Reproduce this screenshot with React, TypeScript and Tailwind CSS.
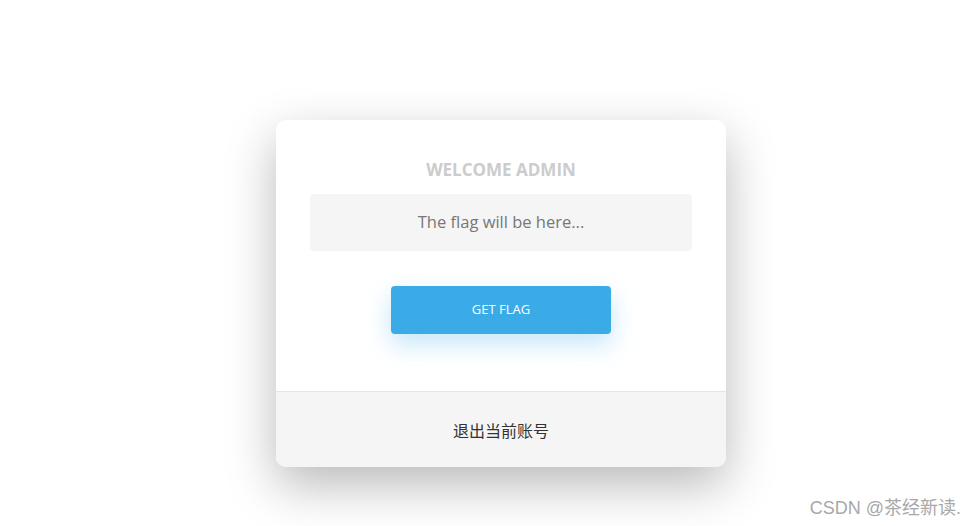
export default function App() {
  return (
    <div className="relative w-[974px] h-[526px] bg-white overflow-hidden" style={{ fontFamily: '"Open Sans", "Noto Sans", "Noto Sans CJK SC", sans-serif' }}>
      <div className="pt-[120px] pl-[276px]">
        <div className="w-[450px] h-[347px] bg-white rounded-[10px] shadow-[0_18px_50px_rgba(0,0,0,0.28)] overflow-hidden flex flex-col">
          <div className="flex-1 flex flex-col items-center pt-[40px]">
            <div className="h-[20px] leading-[20px] text-[17px] font-bold text-[#cccccc]">WELCOME ADMIN</div>
            <div className="mt-[14px] w-[382px] h-[57px] bg-[#f5f5f5] rounded-[4px] flex items-center justify-center text-[16.5px] text-[#777777]">
              The flag will be here...
            </div>
            <div className="mt-[35px] w-[220px] h-[48px] bg-[#3aabe7] rounded-[4px] flex items-center justify-center text-[13px] text-white shadow-[0_10px_25px_rgba(58,171,231,0.3)]">
              GET FLAG
            </div>
          </div>
          <div className="h-[76px] border-t border-[#e2e6ea] bg-[#f5f5f5] flex items-center justify-center text-[16px] text-[#333333]" style={{ fontFamily: '"Noto Sans CJK SC", sans-serif' }}>
            退出当前账号
          </div>
        </div>
      </div>
      <div className="absolute right-[13px] bottom-[4px] text-[18px] text-[#a8a8a8]" style={{ fontFamily: '"Liberation Sans", "Noto Sans CJK SC", sans-serif' }}>
        CSDN @茶经新读.
      </div>
    </div>
  );
}
